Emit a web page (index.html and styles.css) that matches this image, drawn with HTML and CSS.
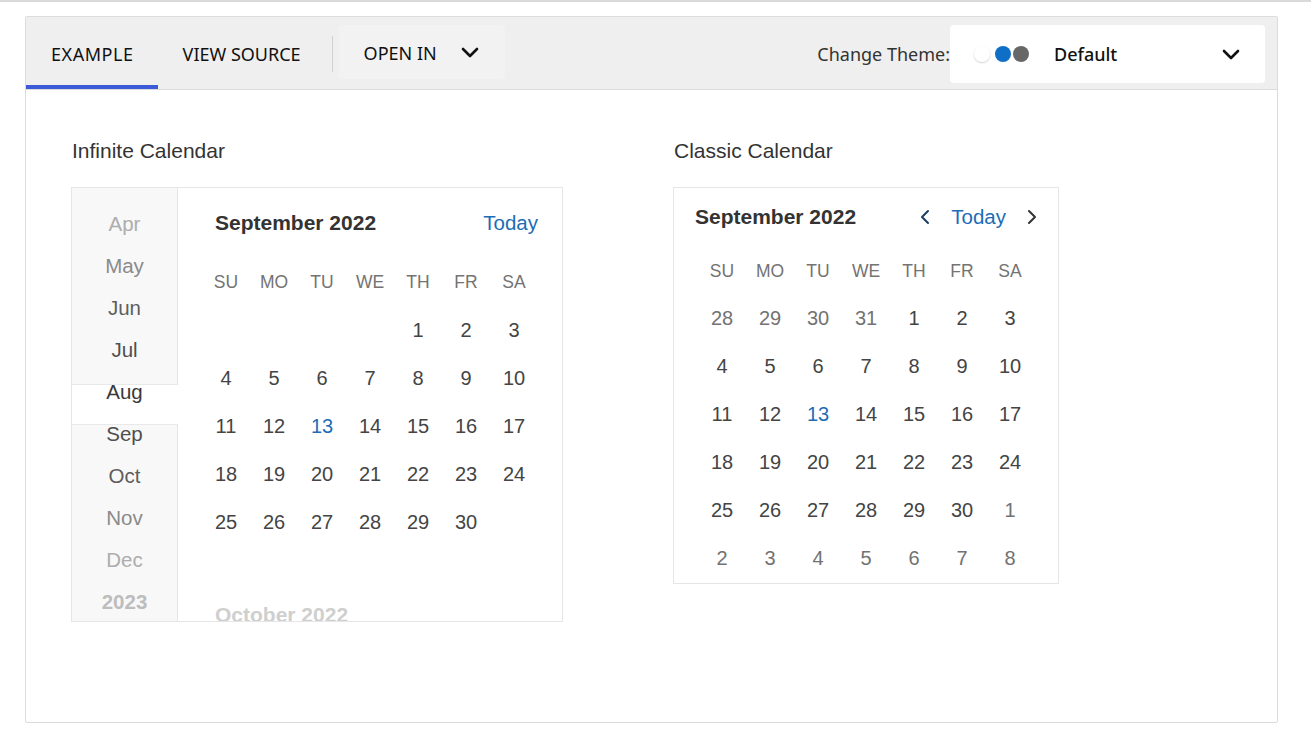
FILE: index.html
```html
<!DOCTYPE html>
<html lang="en">
<head>
<meta charset="utf-8">
<title>Calendar Example</title>
<link rel="stylesheet" href="styles.css">
</head>
<body>
<div class="frame">
  <header class="toolbar">
    <nav class="tabs">
      <div class="tab active tab-example">EXAMPLE</div>
      <div class="tab">VIEW SOURCE</div>
      <div class="sep"></div>
      <div class="openin">
        <span>OPEN IN</span>
        <svg class="chev-down" width="18" height="11" viewBox="0 0 18 11"><polyline points="2,2 9,9 16,2" fill="none" stroke="#111" stroke-width="2.6" stroke-linecap="round" stroke-linejoin="round"/></svg>
      </div>
    </nav>
    <div class="theme">
      <span class="theme-label">Change Theme:</span>
      <div class="theme-select">
        <div class="dots">
          <span class="dot dot-white"></span>
          <span class="dot dot-blue"></span>
          <span class="dot dot-grey"></span>
        </div>
        <span class="theme-name">Default</span>
        <svg class="chev-down sel-chev" width="18" height="11" viewBox="0 0 18 11"><polyline points="2,2 9,9 16,2" fill="none" stroke="#111" stroke-width="2.6" stroke-linecap="round" stroke-linejoin="round"/></svg>
      </div>
    </div>
  </header>

  <main class="content">
    <section class="demo demo-infinite">
      <h2 class="demo-title">Infinite Calendar</h2>
      <div class="infinite">
        <div class="months">
          <div class="m m-f4">Apr</div>
          <div class="m m-f3">May</div>
          <div class="m m-f2">Jun</div>
          <div class="m m-f1">Jul</div>
          <div class="m m-f0">Aug</div>
          <div class="m m-f1">Sep</div>
          <div class="m m-f2">Oct</div>
          <div class="m m-f3">Nov</div>
          <div class="m m-f4">Dec</div>
          <div class="m m-year">2023</div>
        </div>
        <div class="inf-body">
          <div class="cal-head inf-head">
            <span class="cal-title">September 2022</span>
            <span class="today">Today</span>
          </div>
          <div class="grid weekdays">
            <span>SU</span><span>MO</span><span>TU</span><span>WE</span><span>TH</span><span>FR</span><span>SA</span>
          </div>
          <div class="grid days">
            <span></span><span></span><span></span><span></span><span>1</span><span>2</span><span>3</span>
            <span>4</span><span>5</span><span>6</span><span>7</span><span>8</span><span>9</span><span>10</span>
            <span>11</span><span>12</span><span class="cur">13</span><span>14</span><span>15</span><span>16</span><span>17</span>
            <span>18</span><span>19</span><span>20</span><span>21</span><span>22</span><span>23</span><span>24</span>
            <span>25</span><span>26</span><span>27</span><span>28</span><span>29</span><span>30</span><span></span>
          </div>
          <div class="next-title">October 2022</div>
        </div>
      </div>
    </section>

    <section class="demo demo-classic">
      <h2 class="demo-title">Classic Calendar</h2>
      <div class="classic">
        <div class="cal-head classic-head">
          <span class="cal-title">September 2022</span>
          <div class="nav">
            <svg class="nav-chev" width="10" height="16" viewBox="0 0 10 16"><polyline points="8,2 2,8 8,14" fill="none" stroke="#1b3f63" stroke-width="2" stroke-linecap="round" stroke-linejoin="round"/></svg>
            <span class="today">Today</span>
            <svg class="nav-chev" width="10" height="16" viewBox="0 0 10 16"><polyline points="2,2 8,8 2,14" fill="none" stroke="#333" stroke-width="2" stroke-linecap="round" stroke-linejoin="round"/></svg>
          </div>
        </div>
        <div class="grid weekdays">
          <span>SU</span><span>MO</span><span>TU</span><span>WE</span><span>TH</span><span>FR</span><span>SA</span>
        </div>
        <div class="grid days">
          <span class="out">28</span><span class="out">29</span><span class="out">30</span><span class="out">31</span><span>1</span><span>2</span><span>3</span>
          <span>4</span><span>5</span><span>6</span><span>7</span><span>8</span><span>9</span><span>10</span>
          <span>11</span><span>12</span><span class="cur">13</span><span>14</span><span>15</span><span>16</span><span>17</span>
          <span>18</span><span>19</span><span>20</span><span>21</span><span>22</span><span>23</span><span>24</span>
          <span>25</span><span>26</span><span>27</span><span>28</span><span>29</span><span>30</span><span class="out">1</span>
          <span class="out">2</span><span class="out">3</span><span class="out">4</span><span class="out">5</span><span class="out">6</span><span class="out">7</span><span class="out">8</span>
        </div>
      </div>
    </section>
  </main>
</div>
</body>
</html>
```

FILE: styles.css
```css
* { box-sizing: border-box; }

html, body { margin: 0; padding: 0; }

body {
  background: #fff;
  border-top: 2px solid #d9d9d9;
  font-family: "Liberation Sans", Arial, sans-serif;
  color: #333;
  width: 1311px;
  height: 739px;
  overflow: hidden;
}

.frame {
  margin: 14px 0 0 25px;
  width: 1253px;
  height: 707px;
  border: 1px solid #dcdcdc;
  border-radius: 2px;
  display: flex;
  flex-direction: column;
}

/* ---------- toolbar ---------- */
.toolbar {
  height: 73px;
  background: #efefef;
  border-bottom: 1px solid #dcdcdc;
  display: flex;
  justify-content: space-between;
  align-items: stretch;
  font-family: "Noto Sans", "Open Sans", sans-serif;
  font-size: 18px;
  color: #111;
}

.tabs {
  display: flex;
  align-items: stretch;
}

.tab {
  display: flex;
  align-items: center;
  padding: 0 25px;
  border-bottom: 4px solid transparent;
  padding-top: 5px;
}

.tab-example {
  letter-spacing: 0.55px;
  padding-right: 24px;
}

.tab.active {
  border-bottom-color: #3d5bd6;
}

.sep {
  width: 1px;
  background: #d0d0d0;
  margin: 19px 6px 17px 6px;
}

.openin {
  display: flex;
  align-items: center;
  gap: 24px;
  padding: 1px 26px 0 25px;
  margin: 8px 0 10px 0;
  background: #f2f2f2;
  border-radius: 3px;
}

.chev-down { display: block; }

.theme {
  display: flex;
  align-items: center;
  padding-right: 12px;
  padding-top: 2px;
}

.theme-label {
  color: #333;
}

.theme-select {
  width: 315px;
  height: 58px;
  background: #fff;
  border-radius: 4px;
  display: flex;
  align-items: center;
  padding: 0 25px 0 24px;
}

.dots {
  display: flex;
  align-items: center;
  width: 80px;
}

.dot {
  width: 16px;
  height: 16px;
  border-radius: 50%;
  display: block;
}

.dot-white {
  background: #fff;
  box-shadow: 0 1px 2px rgba(0,0,0,0.18);
}

.dot-blue {
  background: #0f6fc6;
  margin-left: 5px;
}

.dot-grey {
  background: #676767;
  margin-left: 2px;
}

.theme-name {
  flex: 1;
  font-weight: 500;
  color: #111;
}

/* ---------- content ---------- */
.content {
  flex: 1;
  display: flex;
  gap: 110px;
  padding: 49px 45px 0 45px;
}

.demo-title {
  margin: 0 0 24px 1px;
  font-size: 21px;
  line-height: 24px;
  font-weight: normal;
  color: #333;
}

.cal-title {
  font-size: 21px;
  line-height: 24px;
  font-weight: bold;
  color: #333;
}

.today {
  font-size: 20.5px;
  line-height: 24px;
  color: #1c6db5;
}

.grid {
  display: grid;
  grid-template-columns: repeat(7, 48px);
}

.grid span {
  height: 48px;
  display: flex;
  align-items: center;
  justify-content: center;
}

.weekdays span {
  font-size: 17.5px;
  color: #737373;
  padding-top: 2px;
}

.days span {
  font-size: 20px;
  color: #444;
}

.days span.cur { color: #1c6db5; }
.days span.out { color: #727272; }

/* ---------- infinite ---------- */
.infinite {
  width: 492px;
  height: 435px;
  border: 1px solid #e6e6e6;
  display: flex;
  overflow: hidden;
}

.months {
  width: 106px;
  flex: none;
  padding-top: 15px;
  overflow: hidden;
  background:
    linear-gradient(to right, transparent 105px, #e6e6e6 105px) 0 0 / 100% 197px no-repeat,
    linear-gradient(to right, transparent 105px, #e6e6e6 105px) 0 237px / 100% 100% no-repeat,
    linear-gradient(to bottom, #f8f8f8 0, #f8f8f8 196px, #e9e9e9 196px, #e9e9e9 197px, #fff 197px, #fff 236px, #e9e9e9 236px, #e9e9e9 237px, #f8f8f8 237px);
}

.m {
  height: 42px;
  line-height: 42px;
  text-align: center;
  font-size: 20.5px;
  padding-right: 1px;
}

.m-f0 { color: #3a3a3a; }
.m-f1 { color: #4f4f4f; }
.m-f2 { color: #5e5e5e; }
.m-f3 { color: #8a8a8a; }
.m-f4 { color: #adadad; }
.m-year { color: #bdbdbd; font-weight: bold; }

.inf-body {
  flex: 1;
  padding: 23px 24px 0 24px;
  overflow: hidden;
}

.cal-head {
  display: flex;
  justify-content: space-between;
  align-items: center;
}

.inf-head {
  padding-left: 13px;
  margin-bottom: 22px;
}

.inf-body .days { margin-top: 1px; }

.next-title {
  margin-top: 57px;
  padding-left: 13px;
  font-size: 21px;
  line-height: 24px;
  font-weight: bold;
  color: #cfcfcf;
}

/* ---------- classic ---------- */
.classic {
  width: 386px;
  border: 1px solid #e6e6e6;
  padding: 17px 24px 1px 24px;
}

.classic-head {
  margin: 0 -3px 17px -3px;
}

.nav {
  display: flex;
  align-items: center;
  gap: 21px;
}

.nav-chev { display: block; }
```
